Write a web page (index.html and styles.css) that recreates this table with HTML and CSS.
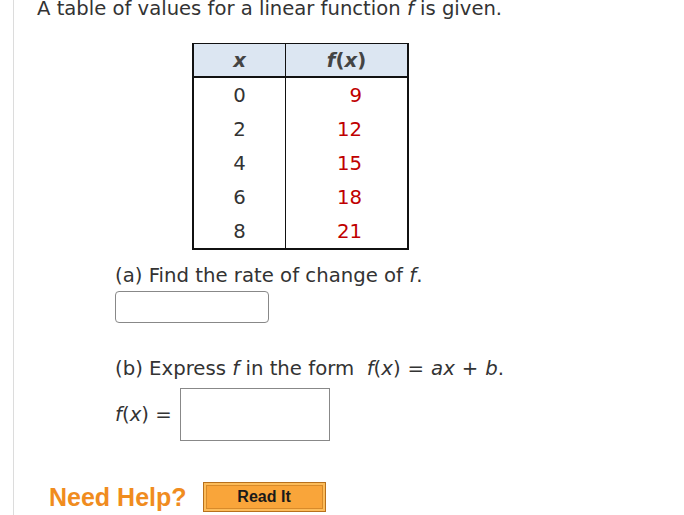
FILE: index.html
```html
<!DOCTYPE html>
<html>
<head>
<meta charset="utf-8">
<link rel="stylesheet" href="styles.css">
</head>
<body>
<div class="page">
  <p class="intro">A table of values for a linear function <i>f</i> is given.</p>
  <table class="values">
    <thead>
      <tr><th class="cx"><i>x</i></th><th class="cf"><i>f</i>(<i>x</i>)</th></tr>
    </thead>
    <tbody>
      <tr><td class="cx">0</td><td class="cf">9</td></tr>
      <tr><td class="cx">2</td><td class="cf">12</td></tr>
      <tr><td class="cx">4</td><td class="cf">15</td></tr>
      <tr><td class="cx">6</td><td class="cf">18</td></tr>
      <tr><td class="cx">8</td><td class="cf">21</td></tr>
    </tbody>
  </table>
  <div class="part part-a">
    <p class="q">(a) Find the rate of change of <i>f</i>.</p>
    <div class="box box-a"></div>
  </div>
  <div class="part part-b">
    <p class="q">(b) Express <i>f</i> in the form&nbsp; <i>f</i>(<i>x</i>)<span class="op">=</span><i>ax</i><span class="op">+</span><i>b</i>.</p>
    <div class="eq-row">
      <span class="lhs"><i>f</i>(<i>x</i>) =</span>
      <div class="box box-b"></div>
    </div>
  </div>
  <div class="help">
    <span class="need">Need Help?</span>
    <span class="btn">Read It</span>
  </div>
</div>
</body>
</html>
```

FILE: styles.css
```css
html, body {
  margin: 0;
  padding: 0;
  background: #fff;
  overflow: hidden;
}
body {
  font-family: "DejaVu Sans", Verdana, sans-serif;
  color: #333;
  font-size: 19.7px;
}
.page {
  margin-left: 13px;
  border-left: 1px solid #dcdcdc;
  height: 515px;
  overflow: hidden;
}
.intro {
  margin: -3px 0 0 23px;
  line-height: 24px;
  font-size: 19.6px;
}
.values {
  margin: 22px 0 0 178px;
  border-collapse: collapse;
  border-top: 1px solid #111;
  border-left: 2px solid #111;
  border-right: 2px solid #111;
  border-bottom: 2px solid #111;
}
.values th {
  background: #dce6f2;
  height: 32px;
  font-weight: bold;
  color: #444;
  border-bottom: 2px solid #111;
  padding: 0;
}
.values td {
  height: 34px;
  padding: 0;
}
.values .cx {
  width: 91px;
  text-align: center;
  border-right: 1px solid #111;
}
.values td.cf {
  width: 121px;
  text-align: right;
  padding-right: 45px;
  box-sizing: border-box;
  color: #c00000;
}
.values th.cf {
  width: 121px;
  text-align: center;
}
.part {
  margin-left: 101px;
}
.q {
  margin: 0;
  line-height: 24px;
}
.op {
  padding: 0 7px;
}
.part-a {
  margin-top: 14px;
}
.box {
  border: 1px solid #888;
  background: #fff;
}
.box-a {
  width: 152px;
  height: 30px;
  border-radius: 4px;
  margin-top: 3px;
}
.part-b {
  margin-top: 34px;
}
.eq-row {
  display: flex;
  align-items: center;
  gap: 7px;
  margin-top: 7px;
}
.lhs {
  white-space: nowrap;
  width: 58px;
}
.box-b {
  width: 148px;
  height: 51px;
}
.help {
  display: flex;
  align-items: center;
  gap: 16px;
  margin: 41px 0 0 35px;
}
.need {
  font-family: "Liberation Sans", Arial, sans-serif;
  font-weight: bold;
  font-size: 25px;
  color: #f08c1e;
}
.btn {
  font-family: "Liberation Sans", Arial, sans-serif;
  font-weight: bold;
  font-size: 16px;
  color: #1a1a1a;
  width: 123px;
  height: 30px;
  box-sizing: border-box;
  display: flex;
  align-items: center;
  justify-content: center;
  background: #f9a53a;
  border: 1px solid #b8701c;
  box-shadow: inset 0 0 0 2px #fcbc5a, inset 0 0 0 3px #d88a2a;
}
```
